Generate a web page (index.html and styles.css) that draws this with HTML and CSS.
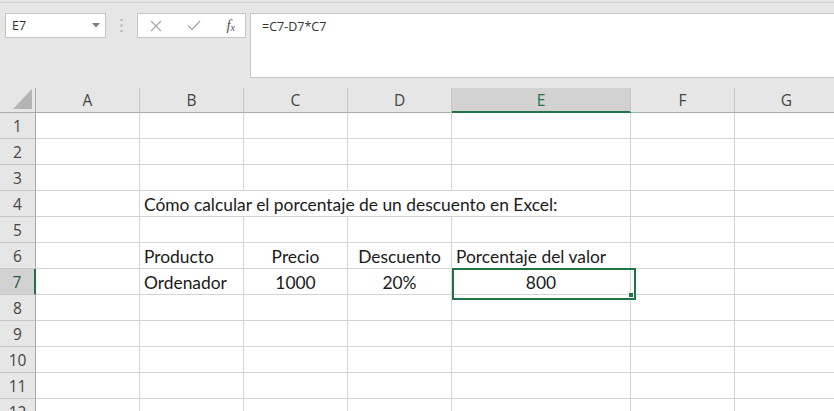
FILE: index.html
```html
<html>
  <head>
    <meta charset="utf-8">
    <link rel="stylesheet" href="styles.css">
  </head>
  <body>
    <div class="formula-bar">
      <div class="name-box">
        <span>E7</span>
        <svg width="8" height="5" viewBox="0 0 8 5"><path d="M0 0 L8 0 L4 4.5 Z" fill="#7a7a7a"/></svg>
      </div>
      <div class="grip">
        <svg width="3" height="13" viewBox="0 0 3 13">
          <rect x="0.5" y="0" width="2" height="2" fill="#b0b0b0"/>
          <rect x="0.5" y="5.5" width="2" height="2" fill="#b0b0b0"/>
          <rect x="0.5" y="11" width="2" height="2" fill="#b0b0b0"/>
        </svg>
      </div>
      <div class="fx-box">
        <svg width="12" height="12" viewBox="0 0 12 12"><path d="M1 1 L11 11 M11 1 L1 11" stroke="#a8a8a8" stroke-width="1.3" fill="none"/></svg>
        <svg width="14" height="11" viewBox="0 0 14 11"><path d="M1 5.5 L5 9.5 L13 1" stroke="#a8a8a8" stroke-width="1.4" fill="none"/></svg>
        <span class="fx">f<sub>x</sub></span>
      </div>
      <div class="formula">=C7-D7*C7</div>
    </div>

    <div class="sheet">
      <div class="col-head corner">
        <svg width="19" height="20" viewBox="0 0 19 20"><path d="M19 0 L19 20 L0 20 Z" fill="#b4b4b4"/></svg>
      </div>
      <div class="col-head">A</div>
      <div class="col-head">B</div>
      <div class="col-head">C</div>
      <div class="col-head">D</div>
      <div class="col-head selected">E</div>
      <div class="col-head">F</div>
      <div class="col-head">G</div>

      <div class="row-head">1</div>
      <div class="cell"></div><div class="cell"></div><div class="cell"></div><div class="cell"></div><div class="cell"></div><div class="cell"></div><div class="cell"></div>

      <div class="row-head">2</div>
      <div class="cell"></div><div class="cell"></div><div class="cell"></div><div class="cell"></div><div class="cell"></div><div class="cell"></div><div class="cell"></div>

      <div class="row-head">3</div>
      <div class="cell"></div><div class="cell"></div><div class="cell"></div><div class="cell"></div><div class="cell"></div><div class="cell"></div><div class="cell"></div>

      <div class="row-head">4</div>
      <div class="cell"></div>
      <div class="cell wide">Cómo calcular el porcentaje de un descuento en Excel:</div>
      <div class="cell"></div><div class="cell"></div>

      <div class="row-head">5</div>
      <div class="cell"></div><div class="cell"></div><div class="cell"></div><div class="cell"></div><div class="cell"></div><div class="cell"></div><div class="cell"></div>

      <div class="row-head">6</div>
      <div class="cell"></div>
      <div class="cell">Producto</div>
      <div class="cell center">Precio</div>
      <div class="cell center">Descuento</div>
      <div class="cell">Porcentaje del valor</div>
      <div class="cell"></div><div class="cell"></div>

      <div class="row-head selected">7</div>
      <div class="cell"></div>
      <div class="cell">Ordenador</div>
      <div class="cell center">1000</div>
      <div class="cell center">20%</div>
      <div class="cell center active">800<span class="handle"></span></div>
      <div class="cell"></div><div class="cell"></div>

      <div class="row-head">8</div>
      <div class="cell"></div><div class="cell"></div><div class="cell"></div><div class="cell"></div><div class="cell"></div><div class="cell"></div><div class="cell"></div>

      <div class="row-head">9</div>
      <div class="cell"></div><div class="cell"></div><div class="cell"></div><div class="cell"></div><div class="cell"></div><div class="cell"></div><div class="cell"></div>

      <div class="row-head">10</div>
      <div class="cell"></div><div class="cell"></div><div class="cell"></div><div class="cell"></div><div class="cell"></div><div class="cell"></div><div class="cell"></div>

      <div class="row-head">11</div>
      <div class="cell"></div><div class="cell"></div><div class="cell"></div><div class="cell"></div><div class="cell"></div><div class="cell"></div><div class="cell"></div>

      <div class="row-head">12</div>
      <div class="cell"></div><div class="cell"></div><div class="cell"></div><div class="cell"></div><div class="cell"></div><div class="cell"></div><div class="cell"></div>
    </div>
  </body>
</html>
```

FILE: styles.css
```css
* { box-sizing: border-box; }

body {
  margin: 0;
  width: 834px;
  height: 411px;
  overflow: hidden;
  background: #e6e6e6;
  font-family: "Open Sans", "Noto Sans", sans-serif;
}

/* FORMULA BAR ================================= */
.formula-bar {
  display: flex;
  align-items: flex-start;
  margin-top: 2px;
  border-top: 1px solid #d4d4d4;
  padding: 10px 0 10px 5px;
}
.name-box {
  width: 101px;
  height: 25px;
  background: #fff;
  border: 1px solid #c6c6c6;
  display: flex;
  align-items: center;
  justify-content: space-between;
  padding: 0 5px 0 6px;
  font-size: 12.5px;
  color: #333;
}
.grip {
  width: 31px;
  height: 25px;
  display: flex;
  align-items: center;
  justify-content: center;
}
.fx-box {
  width: 109px;
  height: 25px;
  background: #fff;
  border: 1px solid #c6c6c6;
  display: flex;
  align-items: center;
  justify-content: space-between;
  padding: 0 10px 0 12px;
}
.fx {
  font-family: "Liberation Serif", serif;
  font-style: italic;
  font-size: 15px;
  color: #555;
  line-height: 1;
}
.fx sub {
  font-size: 10px;
  vertical-align: -1px;
}
.formula {
  flex: 1;
  margin-left: 4px;
  height: 65px;
  background: #fff;
  border: 1px solid #c6c6c6;
  border-right: none;
  padding: 4px 11px;
  font-size: 12.5px;
  line-height: 18px;
  color: #333;
}

/* GRID ======================================== */
.sheet {
  display: grid;
  grid-template-columns: 36px 104px 104px 104px 104px 179px 104px 104px;
  grid-template-rows: 25px;
  grid-auto-rows: 26px;
  background: #fff;
}
.col-head, .row-head {
  background: #e6e6e6;
  display: flex;
  align-items: center;
  justify-content: center;
  font-size: 15.5px;
  color: #444;
}
.col-head {
  border-right: 1px solid #c6c6c6;
  border-bottom: 1px solid #ababab;
}
.corner {
  border-right: 1px solid #ababab;
  justify-content: flex-end;
  align-items: flex-end;
  padding: 0 3px 3px 0;
}
.row-head {
  border-right: 1px solid #ababab;
  border-bottom: 1px solid #c6c6c6;
}
.col-head.selected {
  background: #d2d2d2;
  color: #217346;
  border-bottom: 2px solid #217346;
}
.row-head.selected {
  background: #d2d2d2;
  color: #2f5a40;
  border-right: 2px solid #217346;
}

.cell {
  border-right: 1px solid #d4d4d4;
  border-bottom: 1px solid #d4d4d4;
  display: flex;
  align-items: center;
  padding: 1px 4px 0;
  white-space: nowrap;
  font-family: Lato, "Open Sans", sans-serif;
  font-size: 17.4px;
  color: #1a1a1a;
}
.center { justify-content: center; }
.wide { grid-column: span 4; }

/* active cell */
.active { position: relative; }
.active::after {
  content: '';
  position: absolute;
  top: -1px;
  left: 0;
  width: 180px;
  height: 28px;
  border: 2px solid #217346;
}
.handle {
  position: absolute;
  right: -4px;
  bottom: -4px;
  width: 6px;
  height: 6px;
  background: #217346;
  border: 1px solid #fff;
  z-index: 1;
}
```
